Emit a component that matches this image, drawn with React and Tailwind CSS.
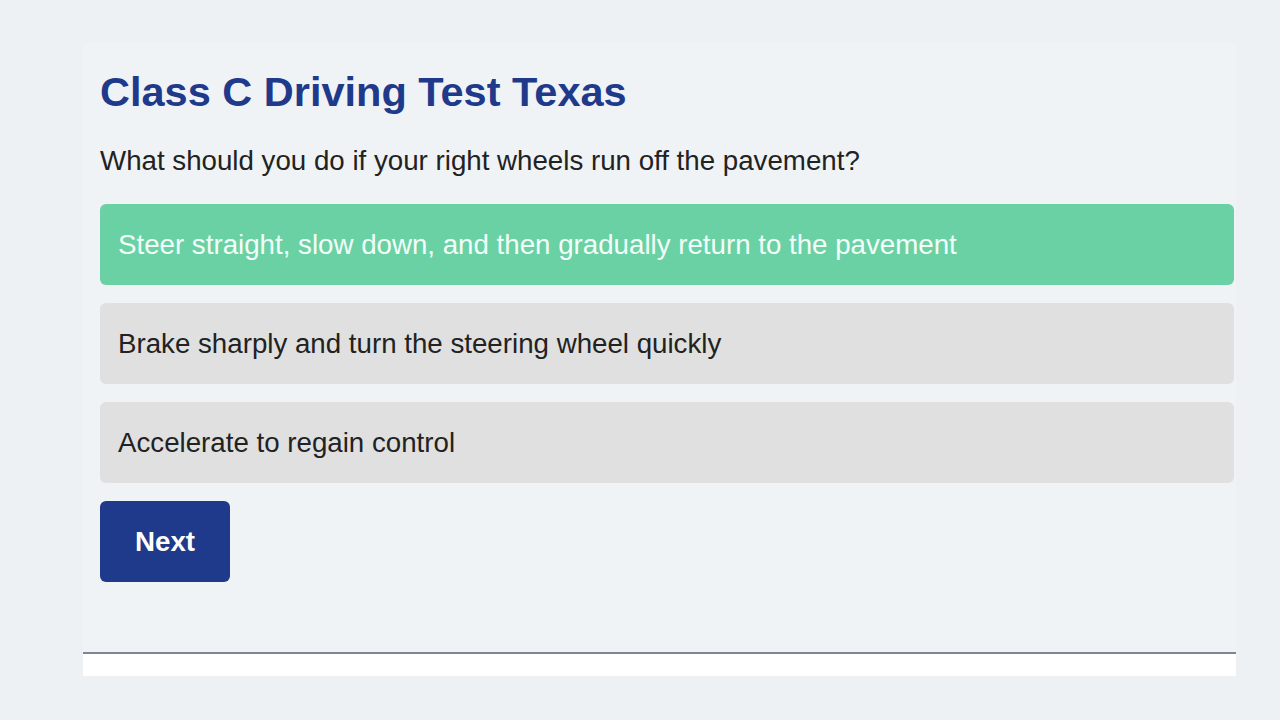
import React from 'react';

const options = [
  { text: 'Steer straight, slow down, and then gradually return to the pavement', correct: true },
  { text: 'Brake sharply and turn the steering wheel quickly', correct: false },
  { text: 'Accelerate to regain control', correct: false },
];

export default function App() {
  return (
    <div className="min-h-screen bg-[#edf1f4] pt-[43px] pl-[83px] pr-[44px] font-['Liberation_Sans',Arial,sans-serif]">
      <div className="bg-[#eff3f6]">
        <div className="pl-[17px] pr-[2px] pt-[25px] pb-[70px]">
          <h1 className="text-[41.5px] leading-[48px] font-bold text-[#1f3a8a]">Class C Driving Test Texas</h1>
          <p className="mt-[28px] text-[27.7px] leading-[34px] text-[#222]">
            What should you do if your right wheels run off the pavement?
          </p>
          <div className="mt-[26px] flex flex-col gap-[18px]">
            {options.map((o) => (
              <div
                key={o.text}
                className={`h-[81px] rounded-[6px] px-[18px] flex items-center text-[27.7px] ${
                  o.correct ? 'bg-[#6ad1a5] text-[#f2fff8]' : 'bg-[#e0e0e0] text-[#222]'
                }`}
              >
                {o.text}
              </div>
            ))}
          </div>
          <button className="mt-[18px] w-[130px] h-[81px] rounded-[6px] bg-[#1f3a8a] text-white text-[27.7px] font-bold">
            Next
          </button>
        </div>
        <div className="h-[2px] bg-[#7f849c]" />
        <div className="h-[22px] bg-white" />
      </div>
    </div>
  );
}
